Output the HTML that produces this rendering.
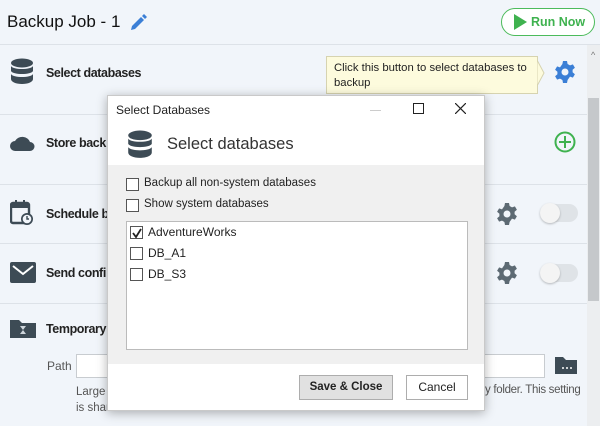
<!DOCTYPE html>
<html><head><style>
*{box-sizing:border-box;margin:0;padding:0}
body{width:600px;height:426px;overflow:hidden;background:#f1f5fa;font-family:"Liberation Sans",sans-serif;position:relative;color:#222}
.abs{position:absolute}
.hr{position:absolute;left:0;width:587px;height:1px;background:#dde2e8}
.lbl{position:absolute;left:46px;font-size:12.5px;font-weight:bold;letter-spacing:-0.4px;color:#222}
.tog{position:absolute;width:38px;height:18px;border-radius:9px;background:#dfe3e7}
.tog::after{content:"";position:absolute;left:0;top:-1px;width:20px;height:20px;border-radius:50%;background:#f4f4f4;box-shadow:0 1px 2px rgba(0,0,0,.25)}
.cb{position:absolute;width:13px;height:13px;border:1px solid #555;background:#fff}
.t{position:absolute;font-size:12px;color:#222}
</style></head><body>
<div class="abs" style="left:7px;top:12px;font-size:17px;color:#111">Backup Job - 1</div>
<svg class="abs" style="left:128px;top:13px" width="20" height="20" viewBox="0 0 20 20"><path d="M3 17l1-4 9-9 3 3-9 9z" fill="#3b7fd6"/><path d="M14 3l2-2 3 3-2 2z" fill="#3b7fd6"/></svg>
<div class="abs" style="left:501px;top:8px;width:94px;height:28px;border:1px solid #4cbb5b;border-radius:14px;background:#fff"></div>
<svg class="abs" style="left:513px;top:14px" width="14" height="16"><path d="M1 0L14 8 1 16z" fill="#3fb24f"/></svg>
<div class="abs" style="left:531px;top:15px;font-size:12.5px;font-weight:bold;color:#3fb24f">Run Now</div>
<div class="hr" style="top:44px;width:600px"></div>
<div class="abs" style="left:587px;top:45px;width:13px;height:381px;background:#eceef0"></div>
<div class="abs" style="left:588px;top:98px;width:11px;height:203px;background:#c5c8cb"></div>
<div class="abs" style="left:591px;top:50px;font-size:9px;color:#777">^</div>
<svg class="abs" style="left:10px;top:58px" width="24" height="28" viewBox="0 0 24 28" fill="#3d4b55"><ellipse cx="12" cy="5" rx="11" ry="4.5"/><path d="M1 8c2 4 20 4 22 0v5c-2 4-20 4-22 0z"/><path d="M1 16c2 4 20 4 22 0v5c0 3-5 5-11 5S1 24 1 21z"/></svg>
<div class="lbl" style="top:66px">Select databases</div>
<div class="abs" style="left:326px;top:56px;width:212px;height:38px;background:#fdfbdd;border:1px solid #d6d3b0"></div>
<svg class="abs" style="left:537px;top:60px" width="8" height="26"><path d="M0 0L7 13 0 26z" fill="#fdfbdd" stroke="#d6d3b0"/></svg>
<div class="abs" style="left:334px;top:61px;font-size:11.3px;line-height:15px;color:#222;white-space:nowrap">Click this button to select databases to<br>backup</div>
<svg class="abs" style="left:553px;top:60px" width="24" height="24" viewBox="0 0 24 24"><path fill="#3b7fd6" d="M10 1h4l.6 3 2.4 1.4 2.9-1 2 3.4-2.3 2 0 2.4 2.3 2-2 3.4-2.9-1L14.6 20 14 23h-4l-.6-3-2.4-1.4-2.9 1-2-3.4 2.3-2v-2.4l-2.3-2 2-3.4 2.9 1L9.4 4z"/><circle cx="12" cy="12" r="3.5" fill="#f1f5fa"/></svg>
<div class="hr" style="top:114px"></div>
<svg class="abs" style="left:10px;top:134px" width="26" height="18"><path d="M5 17a5 5 0 0 1 0-10 8 7 0 0 1 15 1 4.5 4.5 0 0 1 0 9z" fill="#3d4b55"/></svg>
<div class="lbl" style="top:136px">Store back</div>
<svg class="abs" style="left:554px;top:131px" width="22" height="22"><circle cx="11" cy="11" r="9.5" fill="none" stroke="#3fb24f" stroke-width="2"/><path d="M11 5v12M5 11h12" stroke="#3fb24f" stroke-width="2"/></svg>
<div class="hr" style="top:184px"></div>
<svg class="abs" style="left:10px;top:200px" width="24" height="26" viewBox="0 0 24 26"><rect x="1" y="3" width="18" height="20" rx="2" fill="none" stroke="#3d4b55" stroke-width="2.4"/><rect x="1" y="3" width="18" height="5" fill="#3d4b55"/><rect x="5" y="0" width="2" height="5" fill="#3d4b55"/><rect x="13" y="0" width="2" height="5" fill="#3d4b55"/><circle cx="17" cy="19" r="6" fill="#3d4b55"/><circle cx="17" cy="19" r="4.3" fill="#f1f5fa"/><path d="M17 16v3h2" stroke="#3d4b55" stroke-width="1.4" fill="none"/></svg>
<div class="lbl" style="top:207px">Schedule b</div>
<svg class="abs" style="left:495px;top:202px" width="24" height="24" viewBox="0 0 24 24"><path fill="#5d6a73" d="M10 1h4l.6 3 2.4 1.4 2.9-1 2 3.4-2.3 2 0 2.4 2.3 2-2 3.4-2.9-1L14.6 20 14 23h-4l-.6-3-2.4-1.4-2.9 1-2-3.4 2.3-2v-2.4l-2.3-2 2-3.4 2.9 1L9.4 4z"/><circle cx="12" cy="12" r="3.5" fill="#f1f5fa"/></svg>
<div class="tog" style="left:540px;top:204px"></div>
<div class="hr" style="top:243px"></div>
<svg class="abs" style="left:10px;top:262px" width="26" height="21"><rect width="26" height="21" rx="2" fill="#3d4b55"/><path d="M3 4l10 8 10-8" stroke="#fff" stroke-width="2" fill="none"/></svg>
<div class="lbl" style="top:266px">Send confi</div>
<svg class="abs" style="left:495px;top:261px" width="24" height="24" viewBox="0 0 24 24"><path fill="#5d6a73" d="M10 1h4l.6 3 2.4 1.4 2.9-1 2 3.4-2.3 2 0 2.4 2.3 2-2 3.4-2.9-1L14.6 20 14 23h-4l-.6-3-2.4-1.4-2.9 1-2-3.4 2.3-2v-2.4l-2.3-2 2-3.4 2.9 1L9.4 4z"/><circle cx="12" cy="12" r="3.5" fill="#f1f5fa"/></svg>
<div class="tog" style="left:540px;top:264px"></div>
<div class="hr" style="top:303px"></div>
<svg class="abs" style="left:10px;top:318px" width="26" height="20"><path d="M0 2h9l3 3h14v15H0z" fill="#3d4b55"/><path d="M10 8h6l-3 4 3 4h-6l3-4z" fill="#cfd6dc"/></svg>
<div class="lbl" style="top:322px">Temporary</div>
<div class="abs" style="left:47px;top:359px;font-size:12px;color:#555">Path</div>
<div class="abs" style="left:76px;top:354px;width:469px;height:24px;background:#fff;border:1px solid #c8ccd0"></div>
<svg class="abs" style="left:555px;top:356px" width="22" height="18"><path d="M0 1h8l3 3h11v14H0z" fill="#3d4b55"/><path d="M7 12h2M11 12h2M15 12h2" stroke="#fff" stroke-width="1.4"/></svg>
<div class="abs" style="left:76px;top:384px;font-size:11.5px;line-height:16px;color:#555">Large c<br>is share</div>
<div class="abs" style="left:485px;top:384px;font-size:11.5px;color:#555;white-space:nowrap;letter-spacing:-0.3px">y folder. This setting</div>

<div class="abs" style="left:107px;top:95px;width:378px;height:316px;background:#fff;border:1px solid #c9c9c9;box-shadow:0 2px 10px rgba(0,0,0,.3)">
<div class="abs" style="left:8px;top:7px;font-size:12px;color:#222">Select Databases</div>
<div class="abs" style="left:262px;top:14px;width:11px;height:1px;background:#ccc"></div>
<div class="abs" style="left:305px;top:7px;width:11px;height:11px;border:1.3px solid #222"></div>
<svg class="abs" style="left:347px;top:7px" width="11" height="11"><path d="M0 0L11 11M11 0L0 11" stroke="#222" stroke-width="1.2"/></svg>
<svg class="abs" style="left:19px;top:34px" width="26" height="30" viewBox="0 0 24 28" fill="#3d4b55"><ellipse cx="12" cy="5" rx="11" ry="4.5"/><path d="M1 8c2 4 20 4 22 0v5c-2 4-20 4-22 0z"/><path d="M1 16c2 4 20 4 22 0v5c0 3-5 5-11 5S1 24 1 21z"/></svg>
<div class="abs" style="left:59px;top:39px;font-size:16.5px;color:#333">Select databases</div>
<div class="abs" style="left:0;top:69px;width:376px;height:199px;background:#f0f0f0"></div>
<div class="cb" style="left:18px;top:82px"></div><div class="t" style="left:36px;top:81px;font-size:11.5px">Backup all non-system databases</div>
<div class="cb" style="left:18px;top:103px"></div><div class="t" style="left:36px;top:102px;font-size:11.5px">Show system databases</div>
<div class="abs" style="left:18px;top:125px;width:342px;height:129px;background:#fff;border:1px solid #bbb"></div>
<div class="cb" style="left:22px;top:130px"></div>
<svg class="abs" style="left:23px;top:131px" width="12" height="12"><path d="M2 6l3 4 5-8" stroke="#222" stroke-width="1.8" fill="none"/></svg>
<div class="t" style="left:40px;top:129px">AdventureWorks</div>
<div class="cb" style="left:22px;top:151px"></div><div class="t" style="left:40px;top:150px">DB_A1</div>
<div class="cb" style="left:22px;top:172px"></div><div class="t" style="left:40px;top:171px">DB_S3</div>
<div class="abs" style="left:191px;top:279px;width:94px;height:25px;background:#e1e1e1;border:1px solid #adadad;font-size:11.5px;font-weight:bold;text-align:center;line-height:23px">Save &amp; Close</div>
<div class="abs" style="left:298px;top:279px;width:62px;height:25px;background:#fff;border:1px solid #adadad;font-size:12px;text-align:center;line-height:23px">Cancel</div>
</div>
</body></html>
